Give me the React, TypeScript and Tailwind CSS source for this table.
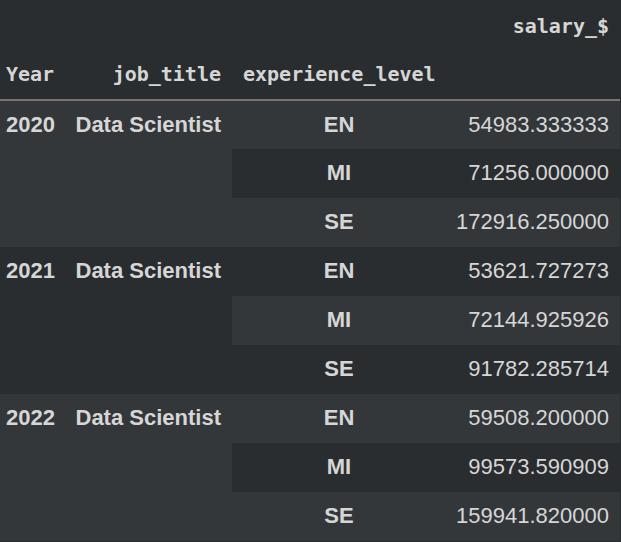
import React from "react";

type Row = { level: string; salary: string };
type Group = { year: string; title: string; rows: Row[] };

const groups: Group[] = [
  {
    year: "2020",
    title: "Data Scientist",
    rows: [
      { level: "EN", salary: "54983.333333" },
      { level: "MI", salary: "71256.000000" },
      { level: "SE", salary: "172916.250000" },
    ],
  },
  {
    year: "2021",
    title: "Data Scientist",
    rows: [
      { level: "EN", salary: "53621.727273" },
      { level: "MI", salary: "72144.925926" },
      { level: "SE", salary: "91782.285714" },
    ],
  },
  {
    year: "2022",
    title: "Data Scientist",
    rows: [
      { level: "EN", salary: "59508.200000" },
      { level: "MI", salary: "99573.590909" },
      { level: "SE", salary: "159941.820000" },
    ],
  },
];

const LIGHT = "bg-[#34373a]";
const DARK = "bg-[#2a2d2f]";

export default function App() {
  let rowNum = 0;

  return (
    <div className="min-h-[542px] w-[621px] bg-[#2a2d2f] text-[#d6d6d6]">
      <table className="table-fixed border-collapse w-[620px]">
        <colgroup>
          <col className="w-[66px]" />
          <col className="w-[166px]" />
          <col className="w-[214px]" />
          <col className="w-[174px]" />
        </colgroup>
        <thead className="font-['DejaVu_Sans_Mono',monospace] font-bold text-[20px]">
          <tr className="h-[49px]">
            <th className="p-0"></th>
            <th className="p-0"></th>
            <th className="p-0"></th>
            <th className="p-0 pr-[11px] pt-[2px] text-right align-middle">salary_$</th>
          </tr>
          <tr className="h-[51px]">
            <th className="p-0 pl-[6px] text-left align-middle border-b-2 border-[#7b7568]">Year</th>
            <th className="p-0 pr-[11px] text-right align-middle border-b-2 border-[#7b7568]">job_title</th>
            <th className="p-0 pl-[11px] text-left align-middle border-b-2 border-[#7b7568]">experience_level</th>
            <th className="p-0 border-b-2 border-[#7b7568]"></th>
          </tr>
        </thead>
        <tbody className="font-['Liberation_Sans',Arial,sans-serif] text-[22px]">
          {groups.map((g) =>
            g.rows.map((r, i) => {
              rowNum += 1;
              const bg = rowNum % 2 === 1 ? LIGHT : DARK;
              const groupBg = (rowNum - i) % 2 === 1 ? LIGHT : DARK;
              return (
                <tr key={g.year + r.level} className="h-[49px]">
                  {i === 0 && (
                    <>
                      <th rowSpan={3} className={`${groupBg} p-0 pl-[6px] text-left align-top font-bold`}>
                        <div className="h-[49px] pb-[2px] flex items-center">{g.year}</div>
                      </th>
                      <th rowSpan={3} className={`${groupBg} p-0 pr-[11px] text-right align-top font-bold`}>
                        <div className="h-[49px] pb-[2px] flex items-center justify-end">{g.title}</div>
                      </th>
                    </>
                  )}
                  <th className={`${bg} p-0 pb-[2px] text-center align-middle font-bold`}>{r.level}</th>
                  <td className={`${bg} p-0 pr-[11px] pb-[2px] text-right align-middle font-normal`}>{r.salary}</td>
                </tr>
              );
            })
          )}
        </tbody>
      </table>
    </div>
  );
}
